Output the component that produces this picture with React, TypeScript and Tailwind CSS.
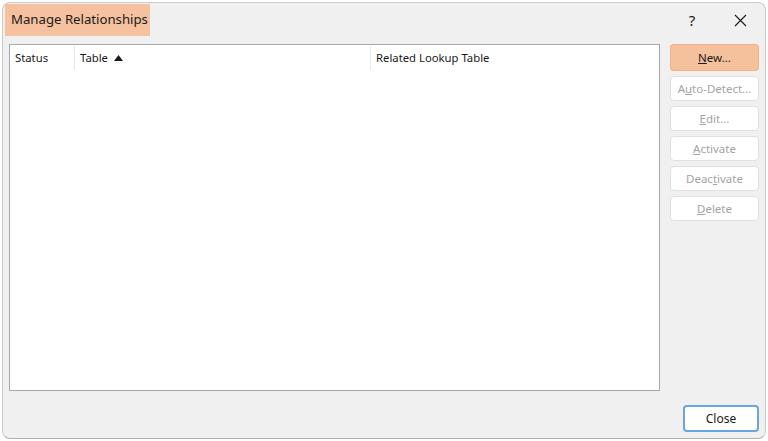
import { FC, ReactNode } from "react";

const font = { fontFamily: '"Segoe UI", "Noto Sans", "Open Sans", sans-serif' };

const SideButton: FC<{ children: ReactNode; primary?: boolean }> = ({ children, primary }) => {
    if (primary)
        return <div className="h-[27px] flex items-center justify-center bg-[#f5c09c] border border-[#f0b48c] rounded-[3px] text-[11.5px] text-[#1a1a1a]">{children}</div>;
    return <div className="h-[25px] flex items-center justify-center bg-white border border-[#e0e0e0] rounded-[4px] text-[11.5px] text-[#a3a3a3]">{children}</div>;
};

export default function App() {
    return <div className="w-[768px] h-[441px] bg-white pl-[2px] pt-[2px] pr-[2px] pb-[2px]" style={font}>
        <div className="h-full rounded-[8px] border border-[#c9c9c9] border-b-[#b0b0b0] bg-[#f0f0f0] flex flex-col">
            {/* title bar */}
            <div className="h-[41px] flex items-start">
                <div className="mt-[1px] ml-[2px] h-[32px] w-[145px] pl-[6px] bg-[#f5c19e] flex items-center text-[13.2px] text-[#1a1a1a]">Manage Relationships</div>
                <div className="flex-1" />
                <div className="mt-[6px] w-[20px] text-center text-[15px] text-[#1a1a1a]">?</div>
                <div className="mt-[9px] ml-[30px] mr-[17px] w-[16px] h-[16px] flex items-center justify-center">
                    <svg width="13" height="13" viewBox="0 0 13 13"><path d="M1 1 L12 12 M12 1 L1 12" stroke="#1a1a1a" strokeWidth="1.1" /></svg>
                </div>
            </div>
            {/* body */}
            <div className="flex pl-[6px] pr-[6px]">
                <div className="flex-1 h-[347px] bg-white border border-[#a8a8a8]">
                    <div className="h-[24px] flex text-[11.3px] text-[#1a1a1a] mt-[1px]">
                        <div className="w-[65px] pl-[5px] flex items-center border-r border-[#e5e5e5]">Status</div>
                        <div className="w-[296px] pl-[5px] flex items-center gap-[6px] border-r border-[#ececec]">
                            Table
                            <svg width="9" height="6" viewBox="0 0 9 6"><path d="M0 6 L4.5 0 L9 6 Z" fill="#1a1a1a" /></svg>
                        </div>
                        <div className="pl-[5px] flex items-center">Related Lookup Table</div>
                    </div>
                </div>
                <div className="w-[89px] ml-[10px] flex flex-col gap-[5px]">
                    <SideButton primary><span><span className="underline">N</span>ew...</span></SideButton>
                    <SideButton><span>A<span className="underline">u</span>to-Detect...</span></SideButton>
                    <SideButton><span><span className="underline">E</span>dit...</span></SideButton>
                    <SideButton><span><span className="underline">A</span>ctivate</span></SideButton>
                    <SideButton><span>Deac<span className="underline">t</span>ivate</span></SideButton>
                    <SideButton><span><span className="underline">D</span>elete</span></SideButton>
                </div>
            </div>
            {/* footer */}
            <div className="flex justify-end pr-[6px] mt-[14px]">
                <div className="w-[76px] h-[27px] flex items-center justify-center bg-white border-2 border-[#6aa6dc] rounded-[4px] text-[12px] text-[#1a1a1a]">Close</div>
            </div>
        </div>
    </div>;
}
